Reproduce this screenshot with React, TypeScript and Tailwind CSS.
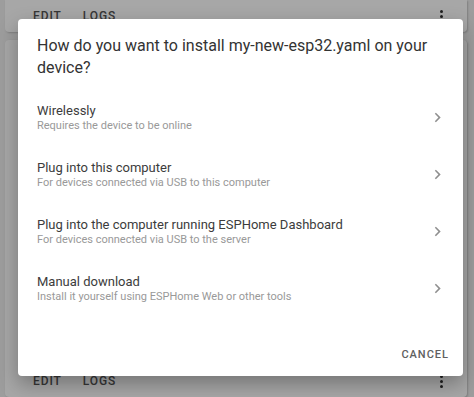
import React from 'react';

const options = [
  { title: 'Wirelessly', sub: 'Requires the device to be online' },
  { title: 'Plug into this computer', sub: 'For devices connected via USB to this computer' },
  { title: 'Plug into the computer running ESPHome Dashboard', sub: 'For devices connected via USB to the server' },
  { title: 'Manual download', sub: 'Install it yourself using ESPHome Web or other tools' },
];

const Dots: React.FC = () => (
  <div className="flex flex-col items-center gap-[2px]">
    <span className="block h-[3px] w-[3px] rounded-full bg-[#1f1f1f]" />
    <span className="block h-[3px] w-[3px] rounded-full bg-[#1f1f1f]" />
    <span className="block h-[3px] w-[3px] rounded-full bg-[#1f1f1f]" />
  </div>
);

const CardActions: React.FC = () => (
  <div className="flex h-[32px] items-center pl-[28px] pr-[24px] text-[12px] font-medium tracking-[0.9px] text-[#363636]">
    <span>EDIT</span>
    <span className="ml-[21px]">LOGS</span>
    <div className="ml-auto">
      <Dots />
    </div>
  </div>
);

const Chevron: React.FC = () => (
  <svg width="19" height="19" viewBox="0 0 24 24" className="shrink-0">
    <path d="M10 6 8.59 7.41 13.17 12l-4.58 4.59L10 18l6-6z" fill="#8f8f8f" />
  </svg>
);

export default function App() {
  return (
    <div
      className="relative h-[397px] w-full overflow-hidden bg-[#9d9d9d]"
      style={{ fontFamily: 'Roboto, "Liberation Sans", sans-serif' }}
    >
      {/* page behind the scrim */}
      <div className="flex flex-col gap-[8px] pl-[5px] pr-[7px]">
        <div className="rounded-b-[4px] bg-[#a7a7a7] shadow-[1px_1px_2px_rgba(0,0,0,0.2)]">
          <CardActions />
        </div>
        <div className="flex h-[357px] flex-col justify-end rounded-[4px] bg-[#a7a7a7] shadow-[1px_1px_2px_rgba(0,0,0,0.2)]">
          <CardActions />
        </div>
      </div>

      {/* dialog */}
      <div className="absolute left-[18px] top-[19px] flex h-[357px] w-[445px] flex-col rounded-[4px] bg-white shadow-[0_8px_20px_rgba(0,0,0,0.3)]">
        <h2 className="pl-[19px] pr-[24px] pt-[16px] text-[16px] font-normal leading-[22px] text-[#333333]">
          How do you want to install my-new-esp32.yaml on your device?
        </h2>
        <ul className="mt-[10px] flex flex-col">
          {options.map((o) => (
            <li key={o.title} className="flex h-[57px] items-center pl-[19px] pr-[16px]">
              <div className="flex flex-1 flex-col">
                <span className="text-[13px] leading-[14px] text-[#3c3c3c]">{o.title}</span>
                <span className="mt-[2px] text-[11px] leading-[12px] text-[#999999]">{o.sub}</span>
              </div>
              <Chevron />
            </li>
          ))}
        </ul>
        <div className="mt-auto flex justify-end px-[6px] pb-[6px]">
          <button className="h-[29px] px-[8px] text-[11px] font-medium tracking-[1px] text-[#606060]">
            CANCEL
          </button>
        </div>
      </div>
    </div>
  );
}
